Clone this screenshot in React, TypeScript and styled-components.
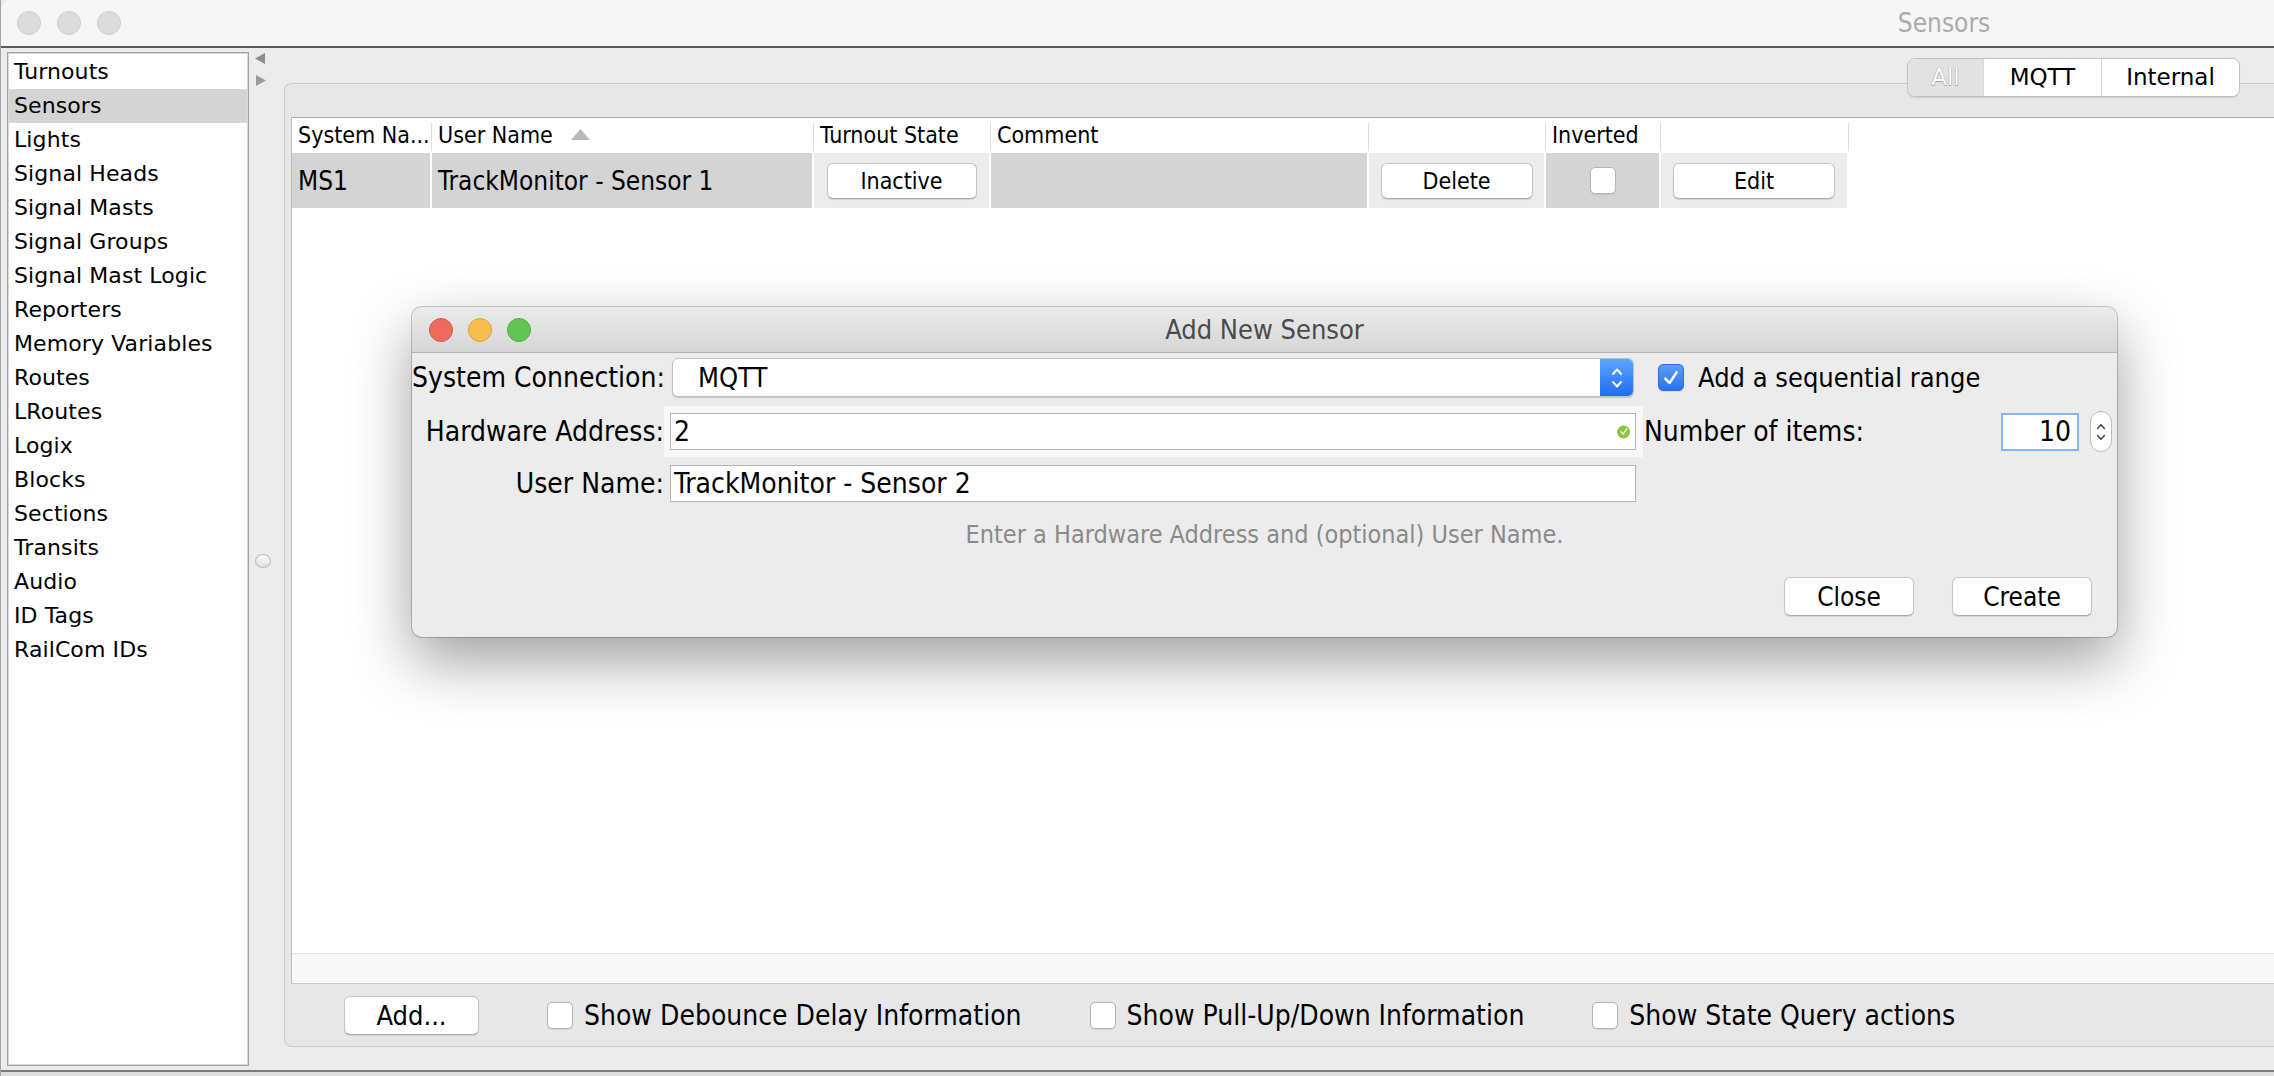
import React from 'react'
import styled, { createGlobalStyle } from 'styled-components'

const COND = `"DejaVu Sans Condensed", "DejaVu Sans", sans-serif`
const WIDE = `"DejaVu Sans", "Liberation Sans", sans-serif`

const GlobalStyle = createGlobalStyle`
  html, body {
    margin: 0;
    padding: 0;
  }
  body {
    width: 2274px;
    height: 1076px;
    overflow: hidden;
    background: #ececec;
    font-family: ${COND};
    font-stretch: condensed;
    color: #000;
  }
  * {
    box-sizing: border-box;
  }
`

const Window = styled.div`
  position: relative;
  width: 2274px;
  height: 1076px;
  display: flex;
  flex-direction: column;
  overflow: hidden;
  background: #ececec;
  border-left: 1px solid #a4a4a4;
`

const TitleBar = styled.div`
  flex: none;
  width: 3886px;
  height: 48px;
  display: grid;
  grid-template-columns: 1fr auto 1fr;
  align-items: center;
  background: #f6f6f6;
  border-bottom: 2px solid #5a5a5a;
  border-top-left-radius: 10px;
`

const Lights = styled.div<{ $pad: number; $gap: number }>`
  display: flex;
  align-items: center;
  gap: ${p => p.$gap}px;
  padding-left: ${p => p.$pad}px;
`

const Light = styled.span<{ $c: string; $b: string }>`
  width: 24px;
  height: 24px;
  border-radius: 50%;
  background: ${p => p.$c};
  border: 1px solid ${p => p.$b};
`

const WindowTitle = styled.div`
  font-family: ${COND};
  font-size: 26px;
  color: #ababab;
`

const Body = styled.div`
  flex: none;
  height: 1024px;
  display: flex;
  border-bottom: 2px solid #7b7b7b;
`

const Sidebar = styled.ul`
  list-style: none;
  margin: 4px 0 4px 6px;
  padding: 2px 0 0;
  width: 242px;
  background: #fff;
  border: 1px solid #a0a0a0;
  box-shadow: inset 0 0 0 1px #dadada;
`

const SidebarItem = styled.li<{ $selected?: boolean }>`
  height: 34px;
  line-height: 34px;
  margin: 0 1px;
  padding-left: 5px;
  font-family: ${WIDE};
  font-stretch: normal;
  font-size: 22px;
  letter-spacing: 0.1px;
  white-space: nowrap;
  background: ${p => (p.$selected ? '#d4d4d4' : 'transparent')};
`

const Splitter = styled.div`
  flex: none;
  width: 35px;
  display: flex;
  flex-direction: column;
  padding-left: 6px;
`

const SplitArrow = styled.svg<{ $top: number }>`
  display: block;
  margin-top: ${p => p.$top}px;
`

const SplitKnob = styled.span`
  display: block;
  margin-top: 468px;
  width: 16px;
  height: 14px;
  border-radius: 50%;
  background: linear-gradient(#fdfdfd, #dedede);
  border: 1px solid #b9b9b9;
`

const Main = styled.div`
  flex: 1;
  min-width: 0;
  display: flex;
  flex-direction: column;
  padding: 10px 0 23px;
`

const TabStrip = styled.div`
  position: relative;
  z-index: 1;
  height: 39px;
  display: flex;
  justify-content: flex-end;
  padding-right: 34px;
`

const Segmented = styled.div`
  display: flex;
  background: #fff;
  border: 1px solid #c2c2c2;
  border-radius: 8px;
  overflow: hidden;
  box-shadow: 0 1px 1px rgba(0, 0, 0, 0.12);
`

const Segment = styled.div<{ $w: number; $active?: boolean }>`
  width: ${p => p.$w}px;
  line-height: 37px;
  text-align: center;
  font-family: ${WIDE};
  font-stretch: normal;
  font-size: 23px;
  & + & {
    border-left: 1px solid #d8d8d8;
  }
  background: ${p => (p.$active ? '#e2e2e2' : '#fff')};
  color: ${p => (p.$active ? '#fff' : '#000')};
  text-shadow: ${p => (p.$active ? '0 0 1px #6f6f6f, 0 1px 0 #a8a8a8' : 'none')};
`

const TabPane = styled.div`
  flex: 1;
  min-height: 0;
  margin-top: -14px;
  display: flex;
  flex-direction: column;
  padding: 33px 0 0 6px;
  background: #e7e7e7;
  border: 1px solid #cacaca;
  border-right: none;
  border-radius: 8px 0 0 8px;
`

const TableScroll = styled.div`
  flex: 1;
  min-height: 0;
  display: flex;
  flex-direction: column;
  background: #fff;
  border-top: 1px solid #a9a9a9;
  border-left: 1px solid #bdbdbd;
`

const TableArea = styled.div`
  flex: 1;
`

const HeaderRow = styled.div`
  display: flex;
  height: 35px;
`

const HeaderCell = styled.div<{ $w: number }>`
  position: relative;
  flex: none;
  width: ${p => p.$w}px;
  display: flex;
  align-items: center;
  gap: 18px;
  padding: 0 0 2px 6px;
  font-size: 23px;
  white-space: nowrap;
  &::after {
    content: '';
    position: absolute;
    right: 0;
    top: 5px;
    bottom: 2px;
    width: 1px;
    background: #dedede;
  }
`

const DataRow = styled.div`
  display: flex;
  height: 55px;
`

const Cell = styled.div<{ $w: number; $light?: boolean; $center?: boolean }>`
  flex: none;
  width: ${p => p.$w}px;
  display: flex;
  align-items: center;
  justify-content: ${p => (p.$center ? 'center' : 'flex-start')};
  padding-left: ${p => (p.$center ? 0 : 6)}px;
  background: ${p => (p.$light ? '#ececec' : '#d4d4d4')};
  border-right: 2px solid #fff;
  font-size: 26px;
  white-space: nowrap;
`

const MacButton = styled.button<{ $w: number; $h: number; $size: number }>`
  width: ${p => p.$w}px;
  height: ${p => p.$h}px;
  padding: 0;
  background: #fff;
  border: 1px solid #c5c5c5;
  border-bottom-color: #a9a9a9;
  border-radius: 6px;
  box-shadow: 0 1px 1px rgba(0, 0, 0, 0.1);
  font-family: ${COND};
  font-stretch: condensed;
  font-size: ${p => p.$size}px;
  color: #000;
`

const Box = styled.span<{ $checked?: boolean }>`
  flex: none;
  width: 26px;
  height: 27px;
  display: flex;
  align-items: center;
  justify-content: center;
  border-radius: 5px;
  background: ${p => (p.$checked ? 'linear-gradient(#5a9dfb, #2a72ee)' : '#fff')};
  border: 1px solid ${p => (p.$checked ? '#2d6fdc' : '#b3b3b3')};
  box-shadow: 0 1px 1px rgba(0, 0, 0, 0.08);
`

const HScroll = styled.div`
  flex: none;
  height: 31px;
  background: #f8f8f8;
  border-top: 1px solid #e5e5e5;
  border-bottom: 1px solid #c8c8c8;
`

const BottomBar = styled.div`
  flex: none;
  height: 62px;
  display: flex;
  align-items: center;
  gap: 68px;
  padding-left: 53px;
`

const CheckLabel = styled.label<{ $size: number; $gap: number }>`
  display: flex;
  align-items: center;
  gap: ${p => p.$gap}px;
  font-size: ${p => p.$size}px;
  white-space: nowrap;
`

const WindowFoot = styled.div`
  flex: 1;
  background: #dedede;
`

/* ---------- dialog ---------- */

const Dialog = styled.div`
  position: absolute;
  left: 411px;
  top: 307px;
  width: 1705px;
  height: 330px;
  display: flex;
  flex-direction: column;
  background: #ececec;
  border-radius: 10px;
  overflow: hidden;
  box-shadow: 0 24px 60px rgba(0, 0, 0, 0.38), 0 0 0 1px rgba(0, 0, 0, 0.2);
`

const DialogTitleBar = styled.div`
  flex: none;
  height: 46px;
  display: grid;
  grid-template-columns: 1fr auto 1fr;
  align-items: center;
  background: linear-gradient(#ebebeb, #d6d6d6);
  border-bottom: 1px solid #b4b4b4;
`

const DialogTitle = styled.div`
  font-size: 27px;
  color: #4b4b4b;
`

const DialogBody = styled.div`
  flex: 1;
  padding-top: 5px;
`

const FormRow = styled.div<{ $h: number; $mt: number }>`
  display: grid;
  grid-template-columns: 252px 979px 1fr;
  align-items: center;
  height: ${p => p.$h}px;
  margin-top: ${p => p.$mt}px;
`

const FieldLabel = styled.div`
  text-align: right;
  font-size: 28px;
  white-space: nowrap;
`

const Combo = styled.div`
  margin: 0 9px 0 8px;
  height: 39px;
  display: flex;
  background: #fff;
  border: 1px solid #c1c1c1;
  border-radius: 6px;
  overflow: hidden;
  box-shadow: 0 1px 1px rgba(0, 0, 0, 0.18);
`

const ComboText = styled.div`
  flex: 1;
  padding-left: 25px;
  line-height: 37px;
  font-size: 27px;
`

const ComboArrows = styled.div`
  flex: none;
  width: 33px;
  display: flex;
  align-items: center;
  justify-content: center;
  background: linear-gradient(#5ea5ff, #1d6df1);
`

const FieldSlot = styled.div<{ $hl?: boolean }>`
  height: 100%;
  display: flex;
  align-items: center;
  padding: 0 7px 0 6px;
  background: ${p => (p.$hl ? '#f8f8f8' : 'transparent')};
`

const TextField = styled.div`
  position: relative;
  width: 100%;
  height: 37px;
  display: flex;
  align-items: center;
  padding-left: 3px;
  background: #fff;
  border: 1px solid #b4b4b4;
  font-size: 28px;
  white-space: nowrap;
`

const ValidDot = styled.span`
  position: absolute;
  right: 5px;
  top: 50%;
  transform: translateY(-50%);
  width: 13px;
  height: 13px;
  border-radius: 50%;
  background: #8dc63f;
  display: flex;
  align-items: center;
  justify-content: center;
`

const SideSlot = styled.div<{ $pl: number }>`
  height: 100%;
  display: flex;
  align-items: center;
  padding: 0 5px 0 ${p => p.$pl}px;
`

const SpinField = styled.div`
  margin-left: auto;
  width: 78px;
  height: 38px;
  background: #fff;
  border: 2px solid #8ab4f4;
  text-align: right;
  padding-right: 6px;
  line-height: 34px;
  font-size: 28px;
`

const Stepper = styled.div`
  margin-left: 11px;
  width: 22px;
  height: 41px;
  display: flex;
  align-items: center;
  justify-content: center;
  background: #fff;
  border: 1px solid #bcbcbc;
  border-radius: 11px;
`

const Hint = styled.div`
  margin-top: 20px;
  line-height: 26px;
  text-align: center;
  font-size: 25px;
  color: #8a8a8a;
`

const DialogButtons = styled.div`
  margin-top: 29px;
  display: flex;
  justify-content: flex-end;
  gap: 38px;
  padding-right: 25px;
`

/* ---------- drawings ---------- */

const Check = ({ color, size }: { color: string; size: number }) => (
  <svg width={size} height={size} viewBox="0 0 16 16">
    <path d="M3.5 8.5 L6.8 12 L12.5 3.5" fill="none" stroke={color} strokeWidth={2} strokeLinecap="round" strokeLinejoin="round" />
  </svg>
)

const UpDown = ({ color, w, h, sw }: { color: string; w: number; h: number; sw: number }) => (
  <svg width={w} height={h} viewBox="0 0 14 26">
    <path d="M3 9 L7 4.5 L11 9 M3 17 L7 21.5 L11 17" fill="none" stroke={color} strokeWidth={sw} strokeLinecap="round" strokeLinejoin="round" />
  </svg>
)

const SortUp = () => (
  <svg width="19" height="11" viewBox="0 0 19 11">
    <path d="M9.5 0 L19 11 L0 11 Z" fill="#b8b8b8" />
  </svg>
)

const columns = [
  { key: 'sys', title: 'System Na...', width: 140 },
  { key: 'user', title: 'User Name', width: 382, sort: true },
  { key: 'state', title: 'Turnout State', width: 177 },
  { key: 'comment', title: 'Comment', width: 378 },
  { key: 'delete', title: '', width: 177 },
  { key: 'inverted', title: 'Inverted', width: 115 },
  { key: 'edit', title: '', width: 188 },
]

const tables = [
  'Turnouts',
  'Sensors',
  'Lights',
  'Signal Heads',
  'Signal Masts',
  'Signal Groups',
  'Signal Mast Logic',
  'Reporters',
  'Memory Variables',
  'Routes',
  'LRoutes',
  'Logix',
  'Blocks',
  'Sections',
  'Transits',
  'Audio',
  'ID Tags',
  'RailCom IDs',
]

const options = ['Show Debounce Delay Information', 'Show Pull-Up/Down Information', 'Show State Query actions']

export default function App() {
  return (
    <>
      <GlobalStyle />
      <Window>
        <TitleBar>
          <Lights $pad={16} $gap={16}>
            <Light $c="#dcdcdc" $b="#cdcdcd" />
            <Light $c="#dcdcdc" $b="#cdcdcd" />
            <Light $c="#dcdcdc" $b="#cdcdcd" />
          </Lights>
          <WindowTitle>Sensors</WindowTitle>
          <div />
        </TitleBar>

        <Body>
          <Sidebar>
            {tables.map(t => (
              <SidebarItem key={t} $selected={t === 'Sensors'}>
                {t}
              </SidebarItem>
            ))}
          </Sidebar>

          <Splitter>
            <SplitArrow $top={5} width="11" height="11" viewBox="0 0 11 11">
              <path d="M0 5.5 L10 0 L10 11 Z" fill="#8c8c8c" />
            </SplitArrow>
            <SplitArrow $top={11} width="11" height="11" viewBox="0 0 11 11">
              <path d="M11 5.5 L1 0 L1 11 Z" fill="#9a9a9a" />
            </SplitArrow>
            <SplitKnob />
          </Splitter>

          <Main>
            <TabStrip>
              <Segmented>
                <Segment $w={75} $active>All</Segment>
                <Segment $w={118}>MQTT</Segment>
                <Segment $w={138}>Internal</Segment>
              </Segmented>
            </TabStrip>

            <TabPane>
              <TableScroll>
                <TableArea>
                  <HeaderRow>
                    {columns.map(c => (
                      <HeaderCell key={c.key} $w={c.width}>
                        {c.title}
                        {c.sort && <SortUp />}
                      </HeaderCell>
                    ))}
                  </HeaderRow>
                  <DataRow>
                    <Cell $w={140}>MS1</Cell>
                    <Cell $w={382}>TrackMonitor - Sensor 1</Cell>
                    <Cell $w={177} $light $center>
                      <MacButton $w={150} $h={36} $size={23}>Inactive</MacButton>
                    </Cell>
                    <Cell $w={378} />
                    <Cell $w={177} $light $center>
                      <MacButton $w={152} $h={36} $size={23}>Delete</MacButton>
                    </Cell>
                    <Cell $w={115} $center>
                      <Box />
                    </Cell>
                    <Cell $w={188} $light $center>
                      <MacButton $w={162} $h={36} $size={23}>Edit</MacButton>
                    </Cell>
                  </DataRow>
                </TableArea>
                <HScroll />
              </TableScroll>

              <BottomBar>
                <MacButton $w={135} $h={39} $size={27}>Add...</MacButton>
                {options.map(o => (
                  <CheckLabel key={o} $size={28} $gap={11}>
                    <Box />
                    {o}
                  </CheckLabel>
                ))}
              </BottomBar>
            </TabPane>
          </Main>
        </Body>
        <WindowFoot />

        <Dialog>
          <DialogTitleBar>
            <Lights $pad={17} $gap={15}>
              <Light $c="#ee6a5f" $b="#d6564c" />
              <Light $c="#f6be4f" $b="#dba43c" />
              <Light $c="#62c655" $b="#4fac43" />
            </Lights>
            <DialogTitle>Add New Sensor</DialogTitle>
            <div />
          </DialogTitleBar>

          <DialogBody>
            <FormRow $h={39} $mt={0}>
              <FieldLabel>System Connection:</FieldLabel>
              <Combo>
                <ComboText>MQTT</ComboText>
                <ComboArrows>
                  <UpDown color="#fff" w={14} h={26} sw={2} />
                </ComboArrows>
              </Combo>
              <SideSlot $pl={15}>
                <CheckLabel $size={27} $gap={14}>
                  <Box $checked>
                    <Check color="#fff" size={20} />
                  </Box>
                  Add a sequential range
                </CheckLabel>
              </SideSlot>
            </FormRow>

            <FormRow $h={51} $mt={9}>
              <FieldLabel>Hardware Address:</FieldLabel>
              <FieldSlot $hl>
                <TextField>
                  2
                  <ValidDot>
                    <Check color="#fff" size={10} />
                  </ValidDot>
                </TextField>
              </FieldSlot>
              <SideSlot $pl={1}>
                <FieldLabel>Number of items:</FieldLabel>
                <SpinField>10</SpinField>
                <Stepper>
                  <UpDown color="#3c3c3c" w={12} h={30} sw={1.6} />
                </Stepper>
              </SideSlot>
            </FormRow>

            <FormRow $h={37} $mt={8}>
              <FieldLabel>User Name:</FieldLabel>
              <FieldSlot>
                <TextField>TrackMonitor - Sensor 2</TextField>
              </FieldSlot>
              <div />
            </FormRow>

            <Hint>Enter a Hardware Address and (optional) User Name.</Hint>

            <DialogButtons>
              <MacButton $w={130} $h={39} $size={26}>Close</MacButton>
              <MacButton $w={140} $h={39} $size={26}>Create</MacButton>
            </DialogButtons>
          </DialogBody>
        </Dialog>
      </Window>
    </>
  )
}
